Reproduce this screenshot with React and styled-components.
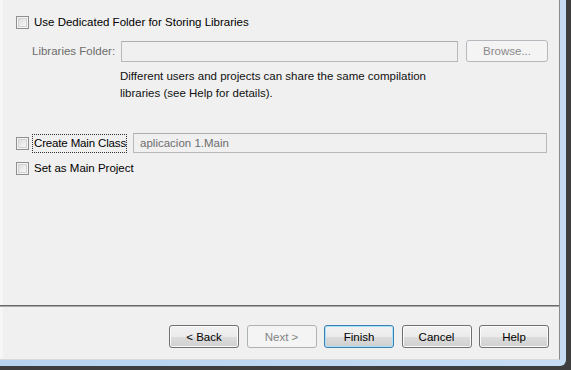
import React from "react";
import styled, { createGlobalStyle, css } from "styled-components";

const GlobalStyle = createGlobalStyle`
  html, body { margin: 0; padding: 0; background: #ffffff; }
  body { font-family: "Liberation Sans", Arial, sans-serif; font-size: 11.5px; }
`;

const Outer = styled.div`
  width: 571px;
  height: 370px;
  box-sizing: border-box;
  background: #3e3e3e;
  padding: 0 5px 4px 0;
  display: flex;
`;

const BlueFrame = styled.div`
  flex: 1;
  display: flex;
  background: linear-gradient(90deg, #b7d3f0, #c6ddf5);
  padding: 0 6px 6px 0;
  border-bottom-right-radius: 6px;
`;

const Client = styled.div`
  flex: 1;
  display: flex;
  flex-direction: column;
  background: #f0f0f0;
  border-right: 1px solid #8a8a8a;
  border-bottom: 1px solid #dadada;
  box-shadow: inset 3px 0 0 #f6f6f6;
  color: #000;
`;

const Content = styled.div`
  flex: 1;
  display: flex;
  flex-direction: column;
  padding: 16px 0 0 16px;
`;

const CheckRow = styled.div`
  display: flex;
  align-items: center;
  height: ${(p) => p.$h || 13}px;
  margin-top: ${(p) => p.$mt || 0}px;
`;

const Box = styled.span`
  width: 13px;
  height: 13px;
  box-sizing: border-box;
  border: 1px solid #8f8f8f;
  background: linear-gradient(135deg, #d6d6d6 0%, #efefef 60%, #fbfbfb 100%);
  box-shadow: inset 0 0 0 1px #f4f4f4, inset 0 0 0 2px #d2d2d2;
  flex-shrink: 0;
`;

const CheckLabel = styled.span`
  margin-left: ${(p) => (p.$focus ? 3 : 4)}px;
  line-height: 17px;
  padding: 0 1px;
  white-space: nowrap;
  ${(p) =>
    p.$focus &&
    css`
      box-sizing: border-box;
      border: 1px dotted #333;
      height: 19px;
      padding: 0 0 0 1px;
      letter-spacing: -0.15px;
    `}
`;

const FolderRow = styled.div`
  display: grid;
  grid-template-columns: 81px 337px 82px;
  column-gap: 8px;
  align-items: center;
  margin: 11px 0 0 16px;
  height: 21px;
`;

const DimLabel = styled.span`
  color: #6d6d6d;
  white-space: nowrap;
`;

const Field = styled.div`
  box-sizing: border-box;
  height: ${(p) => p.$h || 21}px;
  width: ${(p) => (p.$w ? p.$w + "px" : "auto")};
  border: 1px solid #b9b9b9;
  border-top-color: #adadad;
  background: #f0f0f0;
  color: #6d6d6d;
  display: flex;
  align-items: center;
  padding-left: 6px;
  white-space: nowrap;
`;

const BrowseButton = styled.div`
  box-sizing: border-box;
  height: 22px;
  border: 1px solid #b5b9bd;
  border-radius: 3px;
  background: #f4f4f4;
  color: #8a8a8a;
  display: flex;
  align-items: center;
  justify-content: center;
`;

const Description = styled.div`
  margin: 7px 0 0 104px;
  line-height: 17px;
  color: #111;
`;

const MainClassRow = styled.div`
  display: flex;
  align-items: center;
  height: 20px;
  margin-top: 31px;
`;

const Spacer = styled.div`
  width: 6px;
`;

const Footer = styled.div`
  height: 54px;
  border-top: 1px solid #6a6a6a;
  box-shadow: inset 0 1px 0 #a8a8a8;
  display: flex;
  justify-content: flex-end;
  align-items: flex-start;
  padding: 19px 10px 0 0;
  gap: 7.5px;
  box-sizing: border-box;
`;

const Button = styled.div`
  box-sizing: border-box;
  width: 70px;
  height: 23px;
  border-radius: 3px;
  display: flex;
  align-items: center;
  justify-content: center;
  border: 1px solid #707070;
  background: linear-gradient(#f2f2f2 0%, #ebebeb 50%, #dddddd 51%, #cfcfcf 100%);
  box-shadow: inset 0 0 0 1px #fbfbfb;
  color: #000;
  ${(p) =>
    p.$disabled &&
    css`
      border-color: #adb2b5;
      background: #f4f4f4;
      box-shadow: none;
      color: #838383;
    `}
  ${(p) =>
    p.$default &&
    css`
      border-color: #3c7fb1;
      background: linear-gradient(#f2f2f2 0%, #ebebeb 50%, #dddddd 51%, #cfcfcf 100%);
      box-shadow: inset 0 0 0 1px #a6e2fb;
    `}
`;

export default function App() {
  return (
    <>
      <GlobalStyle />
      <Outer>
        <BlueFrame>
          <Client>
            <Content>
              <CheckRow>
                <Box />
                <CheckLabel>Use Dedicated Folder for Storing Libraries</CheckLabel>
              </CheckRow>
              <FolderRow>
                <DimLabel>Libraries Folder:</DimLabel>
                <Field />
                <BrowseButton>Browse...</BrowseButton>
              </FolderRow>
              <Description>
                Different users and projects can share the same compilation
                <br />
                libraries (see Help for details).
              </Description>
              <MainClassRow>
                <Box />
                <CheckLabel $focus>Create Main Class</CheckLabel>
                <Spacer />
                <Field $h={20} $w={414}>aplicacion 1.Main</Field>
              </MainClassRow>
              <CheckRow $h={17} $mt={7}>
                <Box />
                <CheckLabel>Set as Main Project</CheckLabel>
              </CheckRow>
            </Content>
            <Footer>
              <Button>&lt; Back</Button>
              <Button $disabled>Next &gt;</Button>
              <Button $default>Finish</Button>
              <Button>Cancel</Button>
              <Button>Help</Button>
            </Footer>
          </Client>
        </BlueFrame>
      </Outer>
    </>
  );
}
